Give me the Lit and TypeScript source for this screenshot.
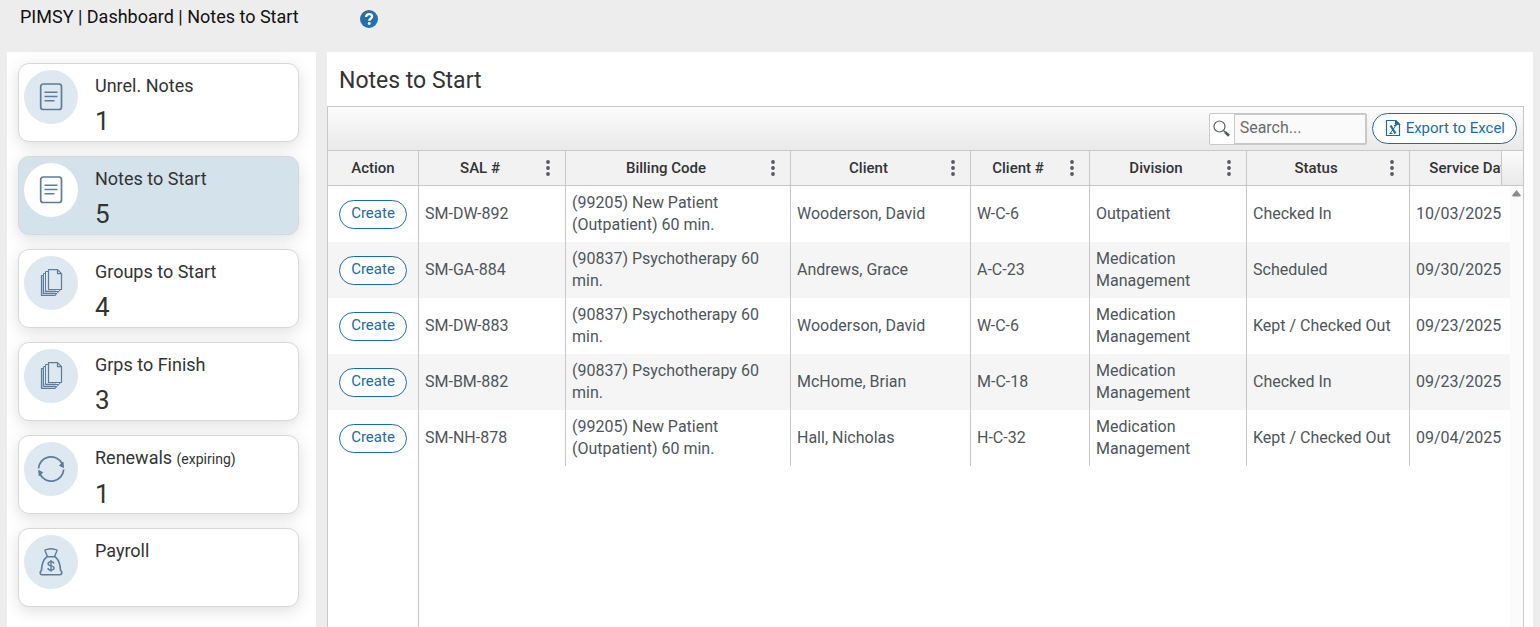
import { LitElement, html, css, svg, nothing } from "lit";
import { customElement, property } from "lit/decorators.js";

const noteIcon = svg`
  <rect x="3.700" y="1" width="20.800" height="25.500" rx="2.500" stroke-width="1.700"></rect>
  <path d="M7.500 9.300h13M7.500 13.500h13M7.500 17.700h10" stroke-width="1.600"></path>`;

const pagesIcon = svg`
  <path d="M4.500 7h2v15.500l1.500-1.500h11v2l-2 3.500H4.500z" fill="currentColor" fill-opacity=".3" stroke="none"></path>
  <path d="M6.500 6.500h-2v20h13.500l1.500-2" stroke-width="1.200"></path>
  <path d="M8.500 4.500h-2v20h13.500l1.500-2" stroke-width="1"></path>
  <path d="M11.500 2.500h-3v20h13.500l1.500-2" stroke-width="1"></path>
  <path d="M11.500 .7h9l4 4v15.800h-13zM20.500 .7v4h4" stroke-width="1.200"></path>`;

const renewIcon = svg`
  <path d="M1.500 13.500a12.500 12.500 0 0 1 23.500-5M26.700 14.500a12.500 12.500 0 0 1-23.500 5" stroke-width="1.700"></path>
  <path d="M22.500 10.500l3.500-3.500.5 5.500zM5.700 17.500l-3.500 3.500-.5-5.500z" fill="currentColor" stroke-width="1"></path>`;

const payrollIcon = svg`
  <path d="M10.500 8.500L8.200 3.200c-.4-1 0-1.700 1-1.600 1 0 1.700-.9 4.800-.9s3.800.9 4.800.9c1-.1 1.400.6 1 1.600L17.500 8.500" stroke-width="1.400"></path>
  <path d="M10 8.700h8c3.600 3 5.300 7.600 5.500 13.600.5.400 1.300 1 1.300 2.300 0 1.500-.7 2.200-2 2.200H5.200c-1.300 0-2-.7-2-2.200 0-1.300.8-1.900 1.300-2.300C4.700 16.300 6.400 11.700 10 8.700z" stroke-width="1.600"></path>
  <path d="M17 15.600c-.3-1.200-1.400-1.800-3-1.800-1.700 0-2.900.7-2.900 2 0 2.900 5.900 1.300 5.900 4.200 0 1.300-1.200 2.100-3 2.100-1.700 0-2.900-.7-3.100-2M14 12v11.800" stroke-width="1.400"></path>`;

@customElement("summary-card")
export class SummaryCard extends LitElement {
  @property() label = "";
  @property() note = "";
  @property() count = "";
  @property({ attribute: false }) icon: unknown = nothing;
  @property({ type: Boolean, reflect: true }) active = false;

  static styles = css`
    :host {
      display: block;
    }
    .card {
      box-sizing: border-box;
      width: 100%;
      height: 79px;
      display: flex;
      align-items: flex-start;
      gap: 17px;
      padding: 6px 5px;
      border: 1px solid #d8d8d8;
      border-radius: 11px;
      background: #fff;
      box-shadow: 0 4px 16px rgba(0, 0, 0, 0.13);
      color: #333;
      font: 18px/32px Roboto, sans-serif;
      text-align: left;
      cursor: pointer;
    }
    .disc {
      flex: none;
      width: 54px;
      height: 54px;
      border-radius: 50%;
      display: grid;
      place-items: center;
      background: #dde8f1;
      color: #5c7c9b;
    }
    :host([active]) .card {
      background: #d4e2eb;
    }
    :host([active]) .disc {
      background: #fff;
    }
    .text {
      display: block;
    }
    .label {
      display: block;
    }
    .note {
      font-size: 14px;
    }
    .count {
      display: block;
      font-size: 26px;
      line-height: 38px;
    }
  `;

  render() {
    return html`<button class="card" type="button">
      <span class="disc">
        <svg width="28" height="28" viewBox="0 0 28 28" fill="none" stroke="currentColor" stroke-linejoin="round" aria-hidden="true">
          ${this.icon}
        </svg>
      </span>
      <span class="text">
        <span class="label">${this.label}${this.note ? html` <span class="note">${this.note}</span>` : nothing}</span>
        <span class="count">${this.count}</span>
      </span>
    </button>`;
  }
}

interface Column {
  title: string;
  width: number;
}

const columns: Column[] = [
  { title: "Action", width: 91 },
  { title: "SAL #", width: 147 },
  { title: "Billing Code", width: 225 },
  { title: "Client", width: 180 },
  { title: "Client #", width: 119 },
  { title: "Division", width: 157 },
  { title: "Status", width: 163 },
  { title: "Service Date", width: 148 },
];

const intake = "(99205) New Patient (Outpatient) 60 min.";
const therapy = "(90837) Psychotherapy 60 min.";
const rows: string[][] = [
  ["SM-DW-892", intake, "Wooderson, David", "W-C-6", "Outpatient", "Checked In", "10/03/2025"],
  ["SM-GA-884", therapy, "Andrews, Grace", "A-C-23", "Medication Management", "Scheduled", "09/30/2025"],
  ["SM-DW-883", therapy, "Wooderson, David", "W-C-6", "Medication Management", "Kept / Checked Out", "09/23/2025"],
  ["SM-BM-882", therapy, "McHome, Brian", "M-C-18", "Medication Management", "Checked In", "09/23/2025"],
  ["SM-NH-878", intake, "Hall, Nicholas", "H-C-32", "Medication Management", "Kept / Checked Out", "09/04/2025"],
];

@customElement("notes-grid")
export class NotesGrid extends LitElement {
  static styles = css`
    :host {
      display: flex;
      flex-direction: column;
      border: 1px solid #c8c8c8;
      border-bottom: 0;
      font: 16px/22px Roboto, sans-serif;
      color: #4f555b;
    }
    .toolbar {
      display: flex;
      justify-content: flex-end;
      align-items: center;
      gap: 5px;
      height: 43px;
      padding: 0 6px;
      border-bottom: 1px solid #c8c8c8;
      background: linear-gradient(#fcfcfc, #e9e9e9);
    }
    .search {
      display: flex;
      box-sizing: border-box;
      width: 158px;
      height: 32px;
      border: 1px solid #c8c8c8;
      border-radius: 2px;
      background: #fff;
    }
    .search-icon {
      display: grid;
      place-items: center;
      width: 24px;
      color: #555a62;
    }
    .search-input {
      flex: 1;
      min-width: 0;
      box-sizing: border-box;
      margin: 0;
      padding: 0 5px 2px;
      border: 1px solid #c8c8c8;
      background: #fafafa;
      font: inherit;
      color: #555;
    }
    .search-input::placeholder {
      color: #6b6b6b;
      opacity: 1;
    }
    .pill {
      display: inline-flex;
      align-items: center;
      justify-content: center;
      box-sizing: border-box;
      border: 1px solid #1f6aa5;
      border-radius: 16px;
      background: #fff;
      color: #1f6aa5;
      font: 15px/20px Roboto, sans-serif;
      cursor: pointer;
    }
    .export {
      height: 31px;
      padding: 0 11px 1px 12px;
      gap: 5px;
    }
    .create {
      width: 68px;
      height: 29px;
      padding: 0 0 2px;
    }
    .head,
    .body {
      display: flex;
    }
    .head {
      height: 34px;
      border-bottom: 1px solid #c8c8c8;
      background: #f2f2f2;
    }
    .body {
      flex: 1;
    }
    .clip {
      flex: 1;
      min-width: 0;
      overflow: hidden;
    }
    .corner {
      box-sizing: border-box;
      width: 22px;
      border-left: 1px solid #c8c8c8;
      background: linear-gradient(#fcfcfc, #e9e9e9);
    }
    .track {
      display: flex;
      justify-content: center;
      width: 13px;
      padding-top: 4px;
      box-sizing: border-box;
      background: #fbfbfb;
      color: #8b8b8b;
    }
    table {
      table-layout: fixed;
      width: max-content;
      border-collapse: separate;
      border-spacing: 0;
    }
    .rows {
      height: 100%;
    }
    th,
    td {
      box-sizing: border-box;
      border-right: 1px solid #c8c8c8;
    }
    th {
      height: 34px;
      padding: 0;
      color: #333;
      font-size: 15px;
      font-weight: 500;
    }
    .heading {
      display: flex;
      align-items: center;
      justify-content: center;
    }
    .with-menu {
      padding: 0 5px;
    }
    .title {
      flex: 1;
      white-space: nowrap;
    }
    .menu {
      display: grid;
      place-items: center;
      width: 24px;
      height: 24px;
      padding: 0;
      border: 0;
      background: none;
      color: #555a62;
      cursor: pointer;
    }
    .row {
      height: 56px;
    }
    .row:nth-child(even) {
      background: #f5f5f5;
    }
    td {
      padding: 6px;
    }
    .action {
      padding: 0;
      text-align: center;
    }
    .rest td {
      border-right: 0;
      padding: 0;
    }
    .rest .action {
      border-right: 1px solid #c8c8c8;
    }
  `;

  private cols() {
    return html`<colgroup>
      ${columns.map((c) => html`<col style="width:${c.width}px" />`)}
    </colgroup>`;
  }

  render() {
    const total = columns.reduce((sum, c) => sum + c.width, 0);
    return html`
      <div class="toolbar">
        <div class="search">
          <label class="search-icon" for="q" aria-label="Search">
            <svg width="17" height="17" viewBox="0 0 17 17" fill="none" stroke="currentColor" aria-hidden="true">
              <circle cx="6.500" cy="6.500" r="5.500" stroke-width="1.200"></circle>
              <path d="M10.500 10.500l1.500 1.500" stroke-width="1.300"></path>
              <path d="M12 12l4 3.800" stroke-width="2.600"></path>
            </svg>
          </label>
          <input class="search-input" id="q" type="text" placeholder="Search..." />
        </div>
        <button class="pill export" type="button">
          <svg width="16" height="18" viewBox="0 0 16 18" fill="none" stroke="currentColor" aria-hidden="true">
            <path d="M1.500 1.500h9l4 4v11h-13z" stroke-width="1.200"></path>
            <path d="M10.500 1v4.500h4.500z" fill="currentColor"></path>
            <path d="M5.500 6.500l5 8" stroke-width="2.200"></path>
            <path d="M10.800 6.500l-5.600 8M4.500 14.500h3M9 6.500h2.500" stroke-width="1"></path>
          </svg>
          Export to Excel
        </button>
      </div>
      <div class="head">
        <div class="clip">
          <table style="width:${total}px">
            ${this.cols()}
            <thead>
              <tr>
                ${columns.map((c, i) =>
                  i === 0
                    ? html`<th scope="col">${c.title}</th>`
                    : html`<th scope="col">
                        <div class="heading with-menu">
                          <span class="title">${c.title}</span>
                          <button class="menu" type="button" aria-label="${c.title} column menu">
                            <svg width="4" height="16" viewBox="0 0 4 16" fill="currentColor" aria-hidden="true">
                              <circle cx="2" cy="2" r="1.900"></circle>
                              <circle cx="2" cy="8" r="1.900"></circle>
                              <circle cx="2" cy="14" r="1.900"></circle>
                            </svg>
                          </button>
                        </div>
                      </th>`
                )}
              </tr>
            </thead>
          </table>
        </div>
        <div class="corner"></div>
      </div>
      <div class="body">
        <div class="clip">
          <table class="rows" style="width:${total}px">
            ${this.cols()}
            <tbody>
              ${rows.map(
                (r) => html`<tr class="row">
                  <td class="action"><button class="pill create" type="button">Create</button></td>
                  ${r.map((v) => html`<td>${v}</td>`)}
                </tr>`
              )}
              <tr class="rest">
                <td class="action"></td>
                <td colspan="7"></td>
              </tr>
            </tbody>
          </table>
        </div>
        <div class="track">
          <svg width="9" height="7" viewBox="0 0 9 7" fill="currentColor" aria-hidden="true">
            <path d="M4.500 0L8.800 5.200Q8.800 6.500 7.500 6.500H1.500Q.2 6.500 .2 5.200z"></path>
          </svg>
        </div>
      </div>
    `;
  }
}

@customElement("app-root")
export class AppRoot extends LitElement {
  static styles = css`
    :host {
      display: flex;
      flex-direction: column;
      box-sizing: border-box;
      height: 100vh;
      background: #ededed;
      font-family: Roboto, sans-serif;
      color: #333;
    }
    .top {
      display: flex;
      align-items: center;
      gap: 61px;
      height: 34px;
      padding: 0 20px 18px;
      color: #111;
    }
    .crumbs {
      font-size: 18px;
      line-height: 34px;
    }
    .help {
      display: flex;
      padding: 3px 0 0;
      border: 0;
      background: none;
      color: #2470ab;
      cursor: pointer;
    }
    .layout {
      flex: 1;
      min-height: 0;
      display: flex;
      gap: 11px;
      padding: 0 7px;
    }
    .side {
      display: flex;
      flex-direction: column;
      gap: 14px;
      box-sizing: border-box;
      width: 309px;
      padding: 11px 17px 0 11px;
      background: #fff;
      overflow: hidden;
    }
    .main {
      flex: 1;
      min-width: 0;
      display: flex;
      flex-direction: column;
      padding-right: 9px;
      background: #fff;
      overflow: hidden;
    }
    .name {
      margin: 0;
      padding: 12px 12px 8px;
      font-size: 23px;
      line-height: 34px;
      font-weight: 400;
    }
    .grid {
      flex: 1;
      min-height: 0;
    }
  `;

  render() {
    return html`
      <header class="top">
        <span class="crumbs">PIMSY | Dashboard | Notes to Start</span>
        <button class="help" type="button" aria-label="Help">
          <svg width="18" height="18" viewBox="0 0 18 18" aria-hidden="true">
            <circle cx="9" cy="9" r="9" fill="currentColor"></circle>
            <path d="M6.100 7C6.300 5 7.500 4.200 9.100 4.200c1.800 0 3 1 3 2.400 0 2.100-2.900 2.100-2.900 4.200" fill="none" stroke="#fff" stroke-width="2.300"></path>
            <circle cx="9.200" cy="13.500" r="1.400" fill="#fff"></circle>
          </svg>
        </button>
      </header>
      <div class="layout">
        <nav class="side">
          <summary-card label="Unrel. Notes" count="1" .icon=${noteIcon}></summary-card>
          <summary-card label="Notes to Start" count="5" .icon=${noteIcon} active></summary-card>
          <summary-card label="Groups to Start" count="4" .icon=${pagesIcon}></summary-card>
          <summary-card label="Grps to Finish" count="3" .icon=${pagesIcon}></summary-card>
          <summary-card label="Renewals" note="(expiring)" count="1" .icon=${renewIcon}></summary-card>
          <summary-card label="Payroll" .icon=${payrollIcon}></summary-card>
        </nav>
        <main class="main">
          <h1 class="name">Notes to Start</h1>
          <notes-grid class="grid"></notes-grid>
        </main>
      </div>
    `;
  }
}
